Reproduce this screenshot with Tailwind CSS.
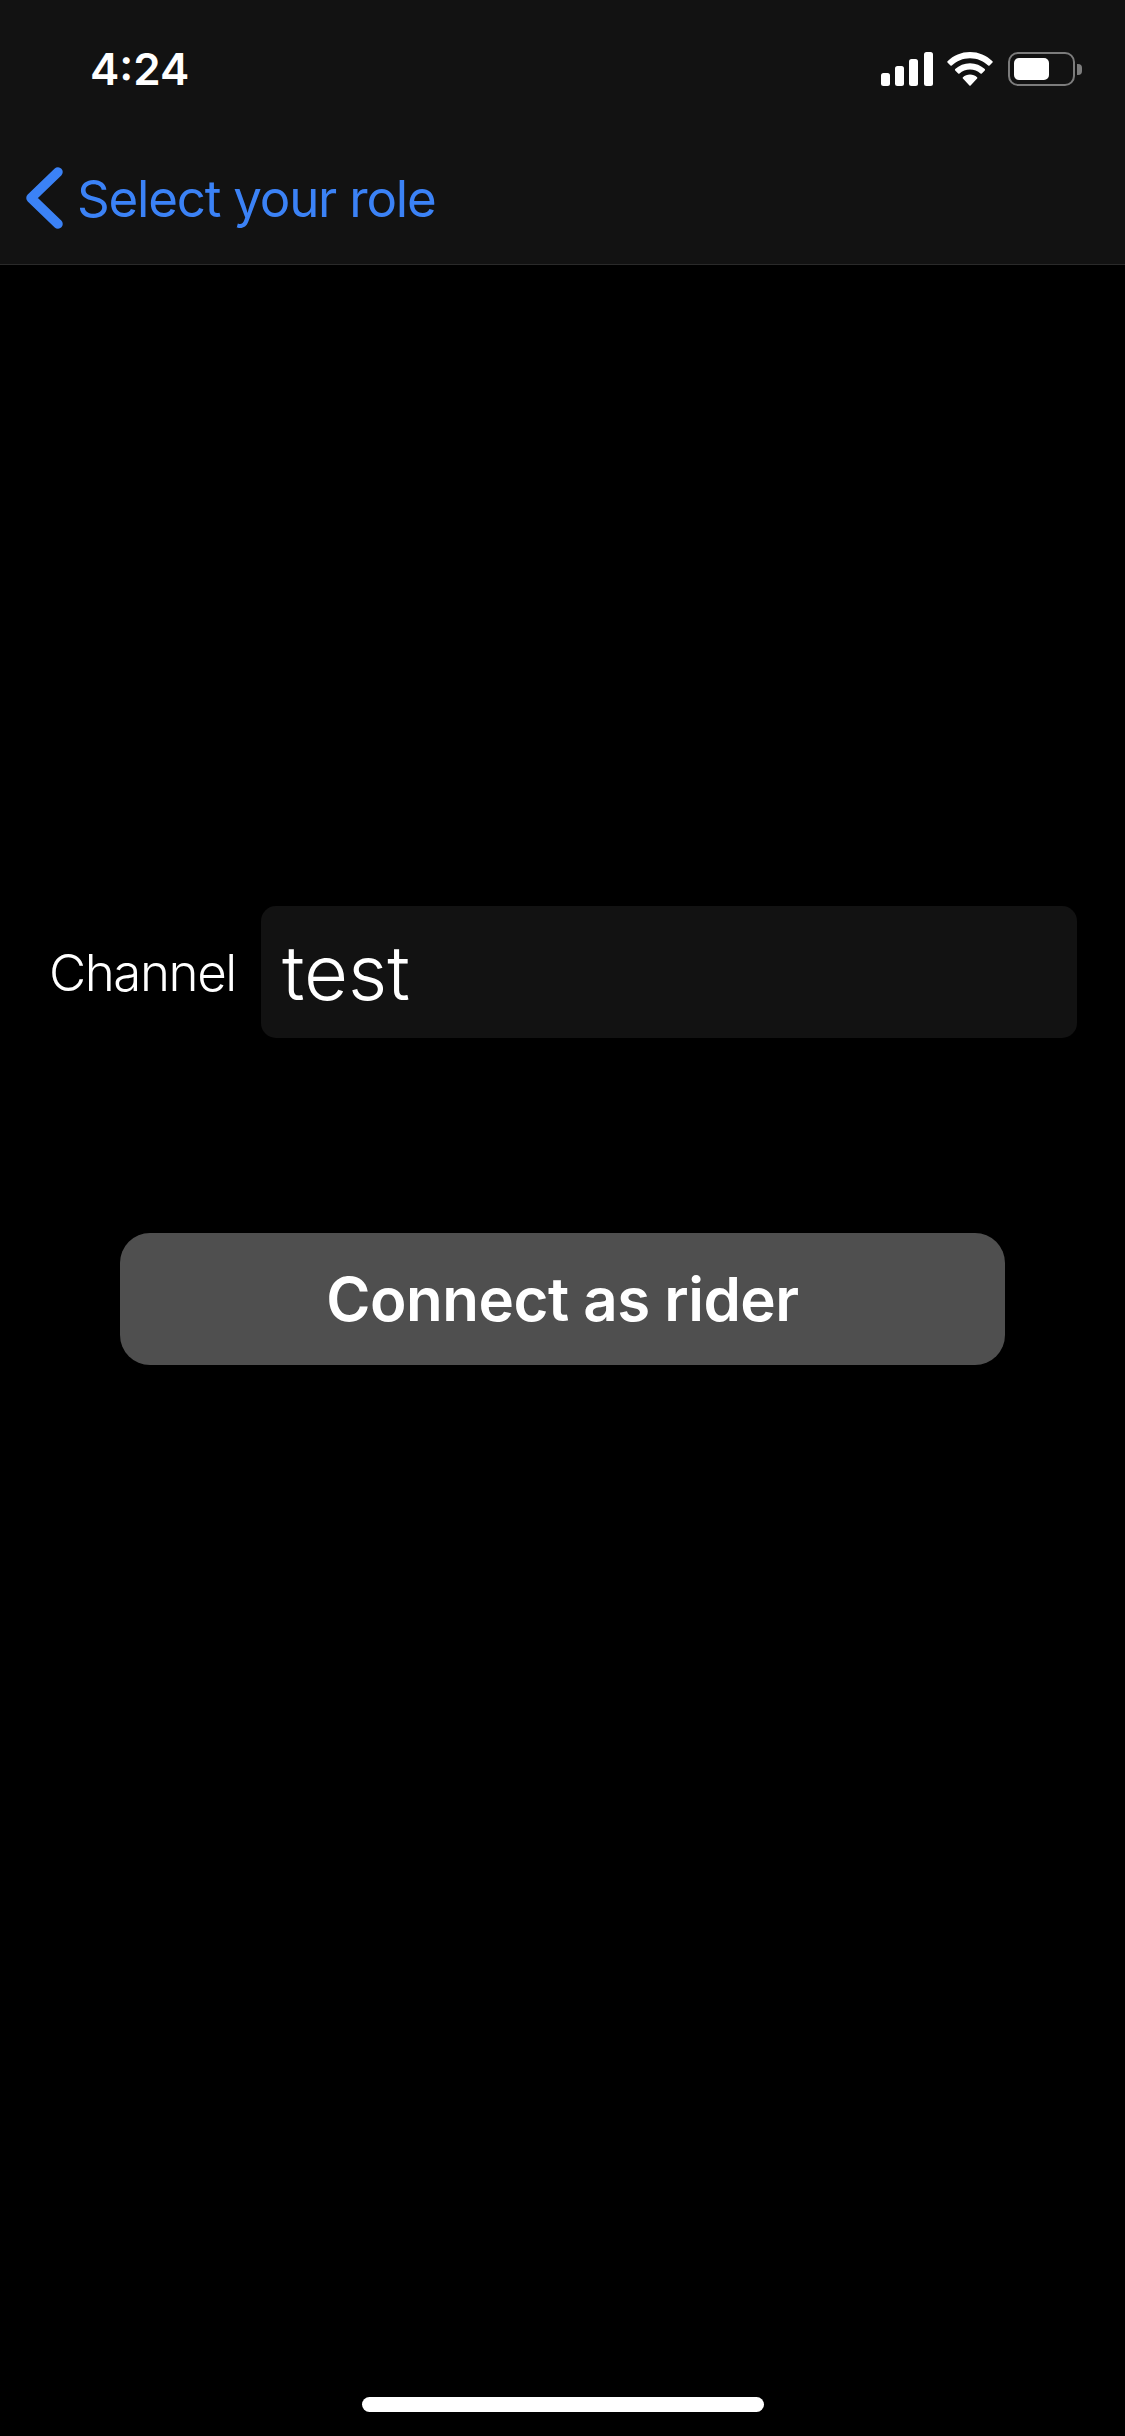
<!DOCTYPE html>
<html lang="en">

<head>
    <meta charset="UTF-8">
    <meta name="viewport" content="width=device-width, initial-scale=1.0">
    <title>Channel</title>
    <script src="https://cdn.jsdelivr.net/npm/@tailwindcss/browser@4"></script>
</head>

<body class="bg-black font-['Inter',sans-serif] text-white">
    <div class="flex flex-col w-[1125px] h-[2436px] overflow-hidden">
        <!-- status bar + nav bar -->
        <header class="bg-[#121212] h-[265px] border-b border-[#2a2a2a]">
            <div class="flex items-center justify-between h-[138px] pl-[90px] pr-[43px]">
                <span class="text-[44px] leading-none font-semibold">4:24</span>
                <div class="flex items-center gap-[14px]">
                    <svg width="52" height="34" viewBox="0 0 52 34" fill="#fff">
                        <rect x="0" y="21" width="9" height="13" rx="2.5" />
                        <rect x="14" y="14" width="9" height="20" rx="2.5" />
                        <rect x="28" y="7" width="9" height="27" rx="2.5" />
                        <rect x="43" y="0" width="9" height="34" rx="2.5" />
                    </svg>
                    <svg width="46" height="34" viewBox="0 0 46 34" fill="#fff">
                        <path d="M23 0C14.300 0 6.500 3.400 0.500 9.200C0.100 9.600 0.100 10.100 0.500 10.500L3.500 13.500C3.900 13.900 4.400 13.900 4.800 13.500C9.600 9 16 6.200 23 6.200C30 6.200 36.400 9 41.200 13.500C41.600 13.900 42.100 13.900 42.500 13.500L45.500 10.500C45.900 10.100 45.900 9.600 45.500 9.200C39.500 3.400 31.700 0 23 0Z" />
                        <path d="M23 11.300C17.300 11.300 12.100 13.500 8.200 17.100C7.800 17.500 7.800 18 8.200 18.400L11.200 21.400C11.600 21.800 12.100 21.800 12.500 21.400C15.300 19 19 17.500 23 17.500C27 17.500 30.700 19 33.500 21.400C33.900 21.800 34.400 21.800 34.800 21.400L37.800 18.400C38.200 18 38.200 17.500 37.800 17.100C33.900 13.500 28.700 11.300 23 11.300Z" />
                        <path d="M23 22.600C20.300 22.600 17.800 23.600 15.900 25.200C15.500 25.600 15.500 26.100 15.900 26.500L22.400 33.500C22.700 33.800 23.300 33.800 23.600 33.500L30.100 26.500C30.500 26.100 30.500 25.600 30.100 25.200C28.200 23.600 25.700 22.600 23 22.600Z" />
                    </svg>
                    <div class="flex items-center gap-[2px] ml-[1px]">
                        <div class="w-[67px] h-[34px] rounded-[10px] border-[2px] border-white/45 p-[4px]">
                            <div class="w-[35px] h-full rounded-[5px] bg-white"></div>
                        </div>
                        <div class="w-[5px] h-[11px] rounded-r-[4px] bg-white/45"></div>
                    </div>
                </div>
            </div>
            <nav class="flex items-center pl-[25px] gap-[13px] h-[64px] mt-[28px]">
                <svg width="39" height="64" viewBox="0 0 39 64" fill="none" stroke="#3b82f6" stroke-width="9.500" stroke-linecap="round" stroke-linejoin="round">
                    <path d="M33 6L6 32L33 58" />
                </svg>
                <span class="text-[51px] leading-none tracking-[-1.2px] text-[#3b82f6]">Select your role</span>
            </nav>
        </header>

        <!-- form -->
        <main class="flex-1 flex flex-col">
            <div class="flex items-center pt-[641px] pl-[49px] pr-[48px]">
                <label class="w-[212px] text-[51px] font-light leading-none tracking-[-1.4px]">Channel</label>
                <div class="flex-1 flex items-center h-[132px] rounded-[15px] bg-[#121212] pl-[21px]">
                    <span class="text-[76px] font-light leading-none">test</span>
                </div>
            </div>
            <button class="flex items-center justify-center self-center mt-[195px] w-[885px] h-[132px] rounded-[30px] bg-[#4f4f4f] text-[60px] font-semibold tracking-[-0.5px]">Connect as rider</button>
            <div class="mt-auto mb-[24px] self-center w-[402px] h-[15px] rounded-full bg-white"></div>
        </main>
    </div>
</body>

</html>
